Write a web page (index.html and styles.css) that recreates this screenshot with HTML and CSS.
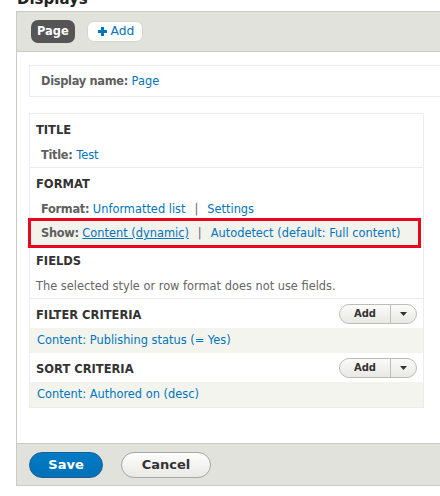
FILE: index.html
```html
<!DOCTYPE html>
<html lang="en">
<head>
<meta charset="utf-8">
<title>Displays</title>
<link rel="stylesheet" href="styles.css">
</head>
<body>
<div class="wrap">
  <h2 class="page-title">Displays</h2>
  <div class="displays">
    <div class="tabs">
      <span class="tab-active">Page</span>
      <span class="tab-add"><svg class="plus" width="9" height="9" viewBox="0 0 9 9"><path d="M3 0h3v3h3v3H6v3H3V6H0V3h3z" fill="#0074bd"/></svg>Add</span>
    </div>
    <div class="display-body">
      <div class="display-name"><span class="label">Display name:</span> <a class="link">Page</a></div>
      <div class="settings">
        <div class="section">
          <div class="sec-head">Title</div>
          <div class="row"><span class="label">Title:</span> <a class="link">Test</a></div>
        </div>
        <div class="section">
          <div class="sec-head">Format</div>
          <div class="row"><span class="label">Format:</span> <a class="link">Unformatted list</a><span class="sep">|</span><a class="link">Settings</a></div>
          <div class="row highlight"><span class="label">Show:</span> <a class="link ul">Content (dynamic)</a><span class="sep">|</span><a class="link">Autodetect (default: Full content)</a></div>
          <div class="sec-head">Fields</div>
          <div class="row desc">The selected style or row format does not use fields.</div>
        </div>
        <div class="section">
          <div class="sec-head">Filter criteria<span class="dropbutton"><span class="db-main">Add</span><span class="db-toggle"><svg width="7" height="4" viewBox="0 0 7 4"><path d="M0 0h7L3.5 4z" fill="#333"/></svg></span></span></div>
          <div class="row gray"><a class="link">Content: Publishing status (= Yes)</a></div>
          <div class="sec-head">Sort criteria<span class="dropbutton"><span class="db-main">Add</span><span class="db-toggle"><svg width="7" height="4" viewBox="0 0 7 4"><path d="M0 0h7L3.5 4z" fill="#333"/></svg></span></span></div>
          <div class="row gray"><a class="link">Content: Authored on (desc)</a></div>
        </div>
      </div>
    </div>
    <div class="actions">
      <span class="btn btn-primary">Save</span>
      <span class="btn btn-default">Cancel</span>
    </div>
  </div>
</div>
</body>
</html>
```
FILE: styles.css
```css
html, body {
  margin: 0;
  padding: 0;
  overflow: hidden;
  background: #fff;
}
body {
  font-family: "DejaVu Sans", Verdana, sans-serif;
  font-size: 11.4px;
  color: #333;
}
.wrap {
  padding-left: 16px;
}
.page-title {
  margin: -10px 0 3px 1px;
  font-size: 15px;
  line-height: 18px;
  font-weight: bold;
  color: #222;
}
.displays {
  width: 440px;
  border: 1px solid #cbcbc6;
  border-right: none;
}
.tabs {
  background: #e1e2dc;
  border-bottom: 1px solid #cbcbc6;
  padding: 8px 14px;
  display: flex;
  align-items: center;
  gap: 12px;
}
.tab-active {
  background: #555;
  color: #fff;
  font-weight: bold;
  font-size: 11.4px;
  height: 23px;
  line-height: 23px;
  padding: 0 6px;
  border-radius: 7px;
}
.tab-add {
  background: #fff;
  border: 1px solid #d6d6d0;
  border-radius: 7px;
  height: 19px;
  line-height: 19px;
  padding: 0 8px 0 10px;
  color: #0074bd;
  font-size: 12.3px;
  display: flex;
  align-items: center;
  gap: 4px;
}
.plus {
  display: block;
}
.display-body {
  background: #fff;
  padding: 13px 0 35px 12px;
}
.display-name {
  border: 1px solid #ececec;
  border-right: none;
  height: 30px;
  line-height: 30px;
  padding-left: 11px;
  margin-bottom: 16px;
}
.label {
  font-weight: bold;
  color: #5f5f5f;
  letter-spacing: -0.3px;
}
.link {
  color: #0074bd;
}
.link.ul {
  text-decoration: underline;
}
.sep {
  color: #666;
  padding: 0 9px;
}
.settings {
  width: 395px;
  box-sizing: border-box;
  border: 1px solid #ececec;
}
.section + .section {
  border-top: 1px solid #ececec;
}
.sec-head {
  height: 29px;
  box-sizing: border-box;
  padding: 3px 6px 0 6px;
  display: flex;
  align-items: center;
  justify-content: space-between;
  font-weight: bold;
  text-transform: uppercase;
  font-size: 11.5px;
  color: #333;
}
.row {
  height: 24px;
  line-height: 24px;
  padding-left: 11px;
  white-space: nowrap;
}
.row.desc {
  padding-left: 6px;
  color: #666;
}
.row.gray {
  height: 25px;
  line-height: 25px;
  background: #f3f4ee;
  padding-left: 7px;
}
.row.highlight {
  background: #f3f3ee;
  margin: 0 5px 0 1px;
  padding-left: 10px;
  outline: 3px solid #e8071c;
}
.dropbutton {
  display: flex;
  height: 18px;
  margin-top: -3px;
  border: 1px solid #bdbdb8;
  border-radius: 10px;
  background: linear-gradient(#fbfbf9, #e8e8e4);
  text-transform: none;
  overflow: hidden;
}
.db-main {
  width: 50px;
  text-align: center;
  line-height: 18px;
  font-size: 10px;
  font-weight: bold;
  color: #333;
  border-right: 1px solid #bdbdb8;
}
.db-toggle {
  width: 25px;
  display: flex;
  align-items: center;
  justify-content: center;
}
.actions {
  background: #e1e2dc;
  border-top: 1px solid #cbcbc6;
  padding: 8px 12px 7px 12px;
  display: flex;
  gap: 18px;
}
.btn {
  height: 24px;
  line-height: 24px;
  border-radius: 20px;
  font-size: 13px;
  font-weight: bold;
  text-align: center;
}
.btn-primary {
  width: 72px;
  color: #fff;
  background: linear-gradient(#007bc6, #0071b8);
  border: 1px solid #1e5c90;
}
.btn-default {
  width: 88px;
  color: #333;
  background: linear-gradient(#fefefe, #e8e8e4);
  border: 1px solid #a6a6a6;
}
```
